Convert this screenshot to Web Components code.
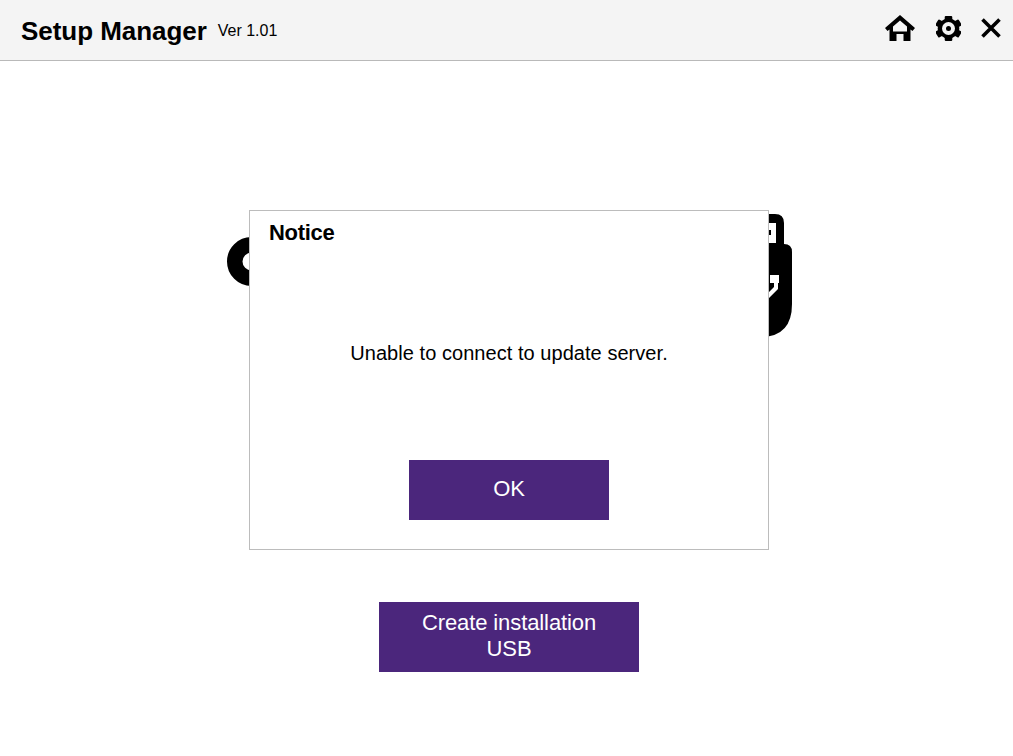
<!DOCTYPE html>
<html>
<head>
<meta charset="utf-8">
<title>Setup Manager</title>
<style>
  html, body { margin: 0; height: 100%; background: #fff; }
  body { font-family: "Liberation Sans", Arial, sans-serif; color: #000; }
</style>
</head>
<body>
<setup-app>
  <app-header slot="header" title="Setup Manager" version="Ver 1.01"></app-header>
  <usb-art slot="art"></usb-art>
  <purple-button slot="action" style="--w:260px;--h:70px;">Create installation<br>USB</purple-button>
  <notice-dialog slot="dialog" heading="Notice">
    Unable to connect to update server.
    <purple-button slot="action" style="--w:200px;--h:60px;">OK</purple-button>
  </notice-dialog>
</setup-app>

<script>
class SetupApp extends HTMLElement {
    connectedCallback() {
        this.attachShadow({ mode: 'open' });
        this.shadowRoot.innerHTML = `
            <style>
                :host { display: block; position: relative; width: 1013px; height: 756px; overflow: hidden; }
                .main { display: flex; flex-direction: column; align-items: center; padding-left: 5px; }
                .art { margin-top: 153px; height: 124px; width: 100%; }
                .action { margin-top: 264px; }
                /* dialog sits over the page */
                .overlay { position: absolute; left: 249px; top: 210px; }
            </style>
            <slot name="header"></slot>
            <div class="main">
                <div class="art"><slot name="art"></slot></div>
                <div class="action"><slot name="action"></slot></div>
            </div>
            <div class="overlay"><slot name="dialog"></slot></div>
        `;
    }
}

class AppHeader extends HTMLElement {
    connectedCallback() {
        this.attachShadow({ mode: 'open' });
        this.shadowRoot.innerHTML = `
            <style>
                :host {
                    display: flex;
                    box-sizing: border-box;
                    height: 61px;
                    align-items: center;
                    padding: 2px 12px 0 21px;
                    background: #f4f4f4;
                    border-bottom: 1px solid #b9b9b9;
                }
                .title { font-size: 26px; font-weight: 700; margin-right: 11px; letter-spacing: -0.05px; }
                .ver { font-size: 16px; flex: 1; }
                .icons { display: flex; align-items: center; gap: 20px; margin-top: -6px; }
                svg { display: block; }
            </style>
            <span class="title">${this.getAttribute('title')}</span>
            <span class="ver">${this.getAttribute('version')}</span>
            <div class="icons">
                <svg width="30" height="26" viewBox="0 0 30 26" style="margin-right:1px">
                    <path fill-rule="evenodd" d="M15 0 L30 13 L27.500 16 L25.500 14.500 V26 H18.500 V19 H11.500 V26 H4.500 V14.500 L2.500 16 L0 13 Z M15 5.500 L8 11.500 V16.500 H22 V11.500 Z"/>
                </svg>
                <svg width="25" height="25" viewBox="0 0 25 25">
                    <g transform="translate(12.500 12.500) scale(1.08 1)">
                        <circle r="10"/>
                        <rect x="-3.500" y="-12.500" width="7" height="25" rx="1"/>
                        <rect x="-3.500" y="-12.500" width="7" height="25" rx="1" transform="rotate(60)"/>
                        <rect x="-3.500" y="-12.500" width="7" height="25" rx="1" transform="rotate(120)"/>
                    </g>
                    <circle cx="12.500" cy="12.500" r="6.500" fill="#f4f4f4"/>
                    <circle cx="12.500" cy="12.500" r="2.500"/>
                </svg>
                <svg width="20" height="20" viewBox="0 0 20 20">
                    <path d="M1.500 1.500 L18.500 18.500 M18.500 1.500 L1.500 18.500" stroke="#000" stroke-width="3.600" fill="none"/>
                </svg>
            </div>
        `;
    }
}

class UsbArt extends HTMLElement {
    connectedCallback() {
        this.attachShadow({ mode: 'open' });
        this.shadowRoot.innerHTML = `
            <style>
                :host { display: flex; justify-content: space-between; align-items: flex-start; padding: 0 221px 0 222px; }
                .disc { margin-top: 23px; }
                svg { display: block; }
            </style>
            <svg class="disc" width="50" height="50" viewBox="0 0 50 50">
                <circle cx="24.500" cy="24.500" r="16.750" fill="none" stroke="#000" stroke-width="15.500"/>
            </svg>
            <svg width="44" height="124" viewBox="0 0 44 124">
                <path d="M0 0 H27 Q36 0 36 9 V30 H36 Q44 30 44 38 V90 Q44 122 14 123 H0 Z"/>
                <path d="M15 9 H28 V29 H15 Z M23 16 V21 H15 V16 Z" fill="#fff" fill-rule="evenodd"/>
                <path d="M22 61 H31 V69 H30 V75 L15 90 V84 L26 73 V69 H22 Z" fill="#fff"/>
            </svg>
        `;
    }
}

class PurpleButton extends HTMLElement {
    connectedCallback() {
        this.attachShadow({ mode: 'open' });
        this.shadowRoot.innerHTML = `
            <style>
                :host {
                    display: flex;
                    box-sizing: border-box;
                    align-items: center;
                    justify-content: center;
                    width: var(--w);
                    height: var(--h);
                    padding-bottom: 2px;
                    background: #4b267c;
                    color: #fff;
                    font-size: 22px;
                    line-height: 26px;
                    letter-spacing: -0.1px;
                    text-align: center;
                    cursor: pointer;
                }
            </style>
            <div><slot></slot></div>
        `;
    }
}

class NoticeDialog extends HTMLElement {
    connectedCallback() {
        this.attachShadow({ mode: 'open' });
        this.shadowRoot.innerHTML = `
            <style>
                :host {
                    display: flex;
                    flex-direction: column;
                    box-sizing: border-box;
                    width: 520px;
                    height: 340px;
                    border: 1px solid #bcbcbc;
                    background: #fff;
                }
                .head { font-size: 22px; font-weight: 700; line-height: 26px; padding: 9px 0 0 19px; letter-spacing: -0.3px; }
                .msg { font-size: 20px; line-height: 22px; letter-spacing: 0.05px; text-align: center; margin-top: 96px; height: 118px; }
                .foot { display: flex; justify-content: center; }
            </style>
            <div class="head">${this.getAttribute('heading')}</div>
            <div class="msg"><slot></slot></div>
            <div class="foot"><slot name="action"></slot></div>
        `;
    }
}

customElements.define('setup-app', SetupApp);
customElements.define('app-header', AppHeader);
customElements.define('usb-art', UsbArt);
customElements.define('purple-button', PurpleButton);
customElements.define('notice-dialog', NoticeDialog);
</script>
</body>
</html>
